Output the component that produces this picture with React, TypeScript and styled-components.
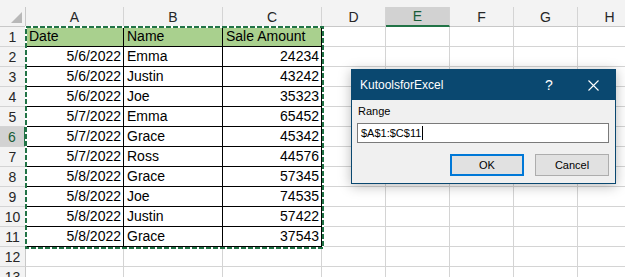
import React from 'react'
import styled, { createGlobalStyle, css } from 'styled-components'

const GlobalStyle = createGlobalStyle`
    html, body {
        margin: 0;
        padding: 0;
        background: #ffffff;
        overflow: hidden;
    }
`;

const Page = styled.div`
    position: relative;
    width: 625px;
    height: 277px;
    overflow: hidden;
    background: #ffffff;
    font-family: "Liberation Sans", Arial, sans-serif;
`;

const TopStrip = styled.div`
    height: 7px;
    background: #f3f3f3;
`;

const Sheet = styled.div`
    position: relative;
    display: grid;
    grid-template-columns: 26px 98px 99px 99px 64px 64px 64px 64px 64px;
    grid-auto-rows: 20px;
`;

const Corner = styled.div`
    box-sizing: border-box;
    background: #f3f3f3;
    border-right: 1px solid #c8c8c8;
    border-bottom: 1px solid #c8c8c8;
    display: flex;
    align-items: flex-end;
    justify-content: flex-end;
    padding: 0 3px 3px 0;
`;

const ColHead = styled.div<{ $active?: boolean }>`
    box-sizing: border-box;
    background: #f3f3f3;
    border-right: 1px solid #d4d4d4;
    border-bottom: 1px solid #c8c8c8;
    display: flex;
    align-items: center;
    justify-content: center;
    font-size: 14px;
    color: #262626;
    ${p => p.$active && css`
        background: #d2d2d2;
        color: #185c37;
        border-bottom: 2px solid #217346;
    `}
`;

const RowHead = styled.div<{ $active?: boolean }>`
    box-sizing: border-box;
    background: #f3f3f3;
    border-right: 1px solid #c8c8c8;
    border-bottom: 1px solid #d4d4d4;
    display: flex;
    align-items: center;
    justify-content: center;
    font-size: 14px;
    color: #262626;
    ${p => p.$active && css`
        background: #d2d2d2;
        color: #185c37;
        border-right: 2px solid #217346;
    `}
`;

const Cell = styled.div<{ $right?: boolean; $boxed?: boolean; $head?: boolean }>`
    box-sizing: border-box;
    border-right: 1px solid #d4d4d4;
    border-bottom: 1px solid #d4d4d4;
    display: flex;
    align-items: flex-end;
    justify-content: ${p => (p.$right ? 'flex-end' : 'flex-start')};
    padding: 0 2px 1px 3px;
    font-size: 14px;
    line-height: 17px;
    color: #000000;
    white-space: nowrap;
    overflow: hidden;
    ${p => p.$boxed && css`
        border-right-color: #000000;
        border-bottom-color: #000000;
    `}
    ${p => p.$head && css`
        background: #a9d08e;
    `}
`;

/* copy-range marquee laid over A1:C11 */
const Ants = styled.div`
    position: absolute;
    grid-column: 2 / 5;
    grid-row: 2 / 13;
    top: -1px;
    left: -1px;
    right: -2px;
    bottom: -2px;
    pointer-events: none;
`;

const AntsSvg = styled.svg`
    display: block;
    width: 100%;
    height: 100%;
    overflow: visible;
`;

const Dialog = styled.div`
    position: absolute;
    left: 351px;
    top: 69px;
    width: 265px;
    height: 115px;
    box-sizing: border-box;
    border: 1px solid #0a4870;
    background: #f0f0f0;
    box-shadow: 0 2px 12px rgba(0, 0, 0, 0.28);
    display: flex;
    flex-direction: column;
`;

const TitleBar = styled.div`
    height: 30px;
    background: #0a4870;
    display: flex;
    align-items: center;
    padding-left: 8px;
    color: #ffffff;
    font-size: 12px;
`;

const Title = styled.span`
    flex: 1;
`;

const TitleButton = styled.span`
    width: 44px;
    height: 30px;
    display: flex;
    align-items: center;
    justify-content: center;
    font-size: 14px;
`;

const Body = styled.div`
    display: flex;
    flex-direction: column;
    padding: 5px 5px 7px 5px;
    font-size: 11px;
    color: #000000;
`;

const Label = styled.div`
    line-height: 13px;
    padding-left: 1px;
    margin-bottom: 5px;
`;

const Field = styled.div`
    box-sizing: border-box;
    height: 20px;
    width: 252px;
    background: #ffffff;
    border: 1px solid #7a7a7a;
    display: flex;
    align-items: center;
    padding-left: 3px;
    font-size: 11px;
`;

const Caret = styled.span`
    width: 1px;
    height: 14px;
    background: #000000;
    margin-left: 1px;
`;

const Actions = styled.div`
    display: flex;
    justify-content: flex-end;
    gap: 11px;
    margin-top: 11px;
    padding-right: 1px;
`;

const Button = styled.div<{ $primary?: boolean }>`
    box-sizing: border-box;
    width: 74px;
    height: 22px;
    background: #e1e1e1;
    border: 1px solid #adadad;
    display: flex;
    align-items: center;
    justify-content: center;
    font-size: 11px;
    ${p => p.$primary && css`
        border: 2px solid #0078d7;
    `}
`;

const columns = ['A', 'B', 'C', 'D', 'E', 'F', 'G', 'H']

const rows: [string, string, number][] = [
    ['5/6/2022', 'Emma', 24234],
    ['5/6/2022', 'Justin', 43242],
    ['5/6/2022', 'Joe', 35323],
    ['5/7/2022', 'Emma', 65452],
    ['5/7/2022', 'Grace', 45342],
    ['5/7/2022', 'Ross', 44576],
    ['5/8/2022', 'Grace', 57345],
    ['5/8/2022', 'Joe', 74535],
    ['5/8/2022', 'Justin', 57422],
    ['5/8/2022', 'Grace', 37543],
]

const ACTIVE_ROW = 6
const ACTIVE_COL = 'E'

const App: React.FC = () => {
    const renderRow = (n: number) => {
        let values: (string | number)[] = []
        if (n === 1) values = ['Date', 'Name', 'Sale Amount']
        else if (n <= 11) values = rows[n - 2]

        return (
            <React.Fragment key={n}>
                <RowHead $active={n === ACTIVE_ROW}>{n}</RowHead>
                {columns.map((c, i) => {
                    const inTable = i < 3 && values.length > 0
                    const v = inTable ? values[i] : ''
                    const right = n > 1 && (i === 0 || i === 2)
                    return (
                        <Cell key={c} $boxed={inTable} $head={n === 1 && i < 3} $right={right}>
                            {v}
                        </Cell>
                    )
                })}
            </React.Fragment>
        )
    }

    return (
        <>
            <GlobalStyle />
            <Page>
                <TopStrip />
                <Sheet>
                    <Corner>
                        <svg width="11" height="11" viewBox="0 0 11 11">
                            <polygon points="11,0 11,11 0,11" fill="#b8b8b8" />
                        </svg>
                    </Corner>
                    {columns.map(c => (
                        <ColHead key={c} $active={c === ACTIVE_COL}>{c}</ColHead>
                    ))}
                    {Array.from({ length: 13 }, (_, i) => renderRow(i + 1))}
                    <Ants>
                        <AntsSvg>
                            <rect x="1" y="1" width="calc(100% - 2px)" height="calc(100% - 2px)" fill="none" stroke="#ffffff" strokeWidth="2" />
                            <rect x="1" y="1" width="calc(100% - 2px)" height="calc(100% - 2px)" fill="none" stroke="#217346" strokeWidth="2" strokeDasharray="5 2" />
                        </AntsSvg>
                    </Ants>
                </Sheet>

                <Dialog>
                    <TitleBar>
                        <Title>KutoolsforExcel</Title>
                        <TitleButton>?</TitleButton>
                        <TitleButton>
                            <svg width="11" height="11" viewBox="0 0 11 11">
                                <path d="M0.5 0.5 L10.5 10.5 M10.5 0.5 L0.5 10.5" stroke="#ffffff" strokeWidth="1.1" />
                            </svg>
                        </TitleButton>
                    </TitleBar>
                    <Body>
                        <Label>Range</Label>
                        <Field>
                            $A$1:$C$11
                            <Caret />
                        </Field>
                        <Actions>
                            <Button $primary>OK</Button>
                            <Button>Cancel</Button>
                        </Actions>
                    </Body>
                </Dialog>
            </Page>
        </>
    )
}

export default App
